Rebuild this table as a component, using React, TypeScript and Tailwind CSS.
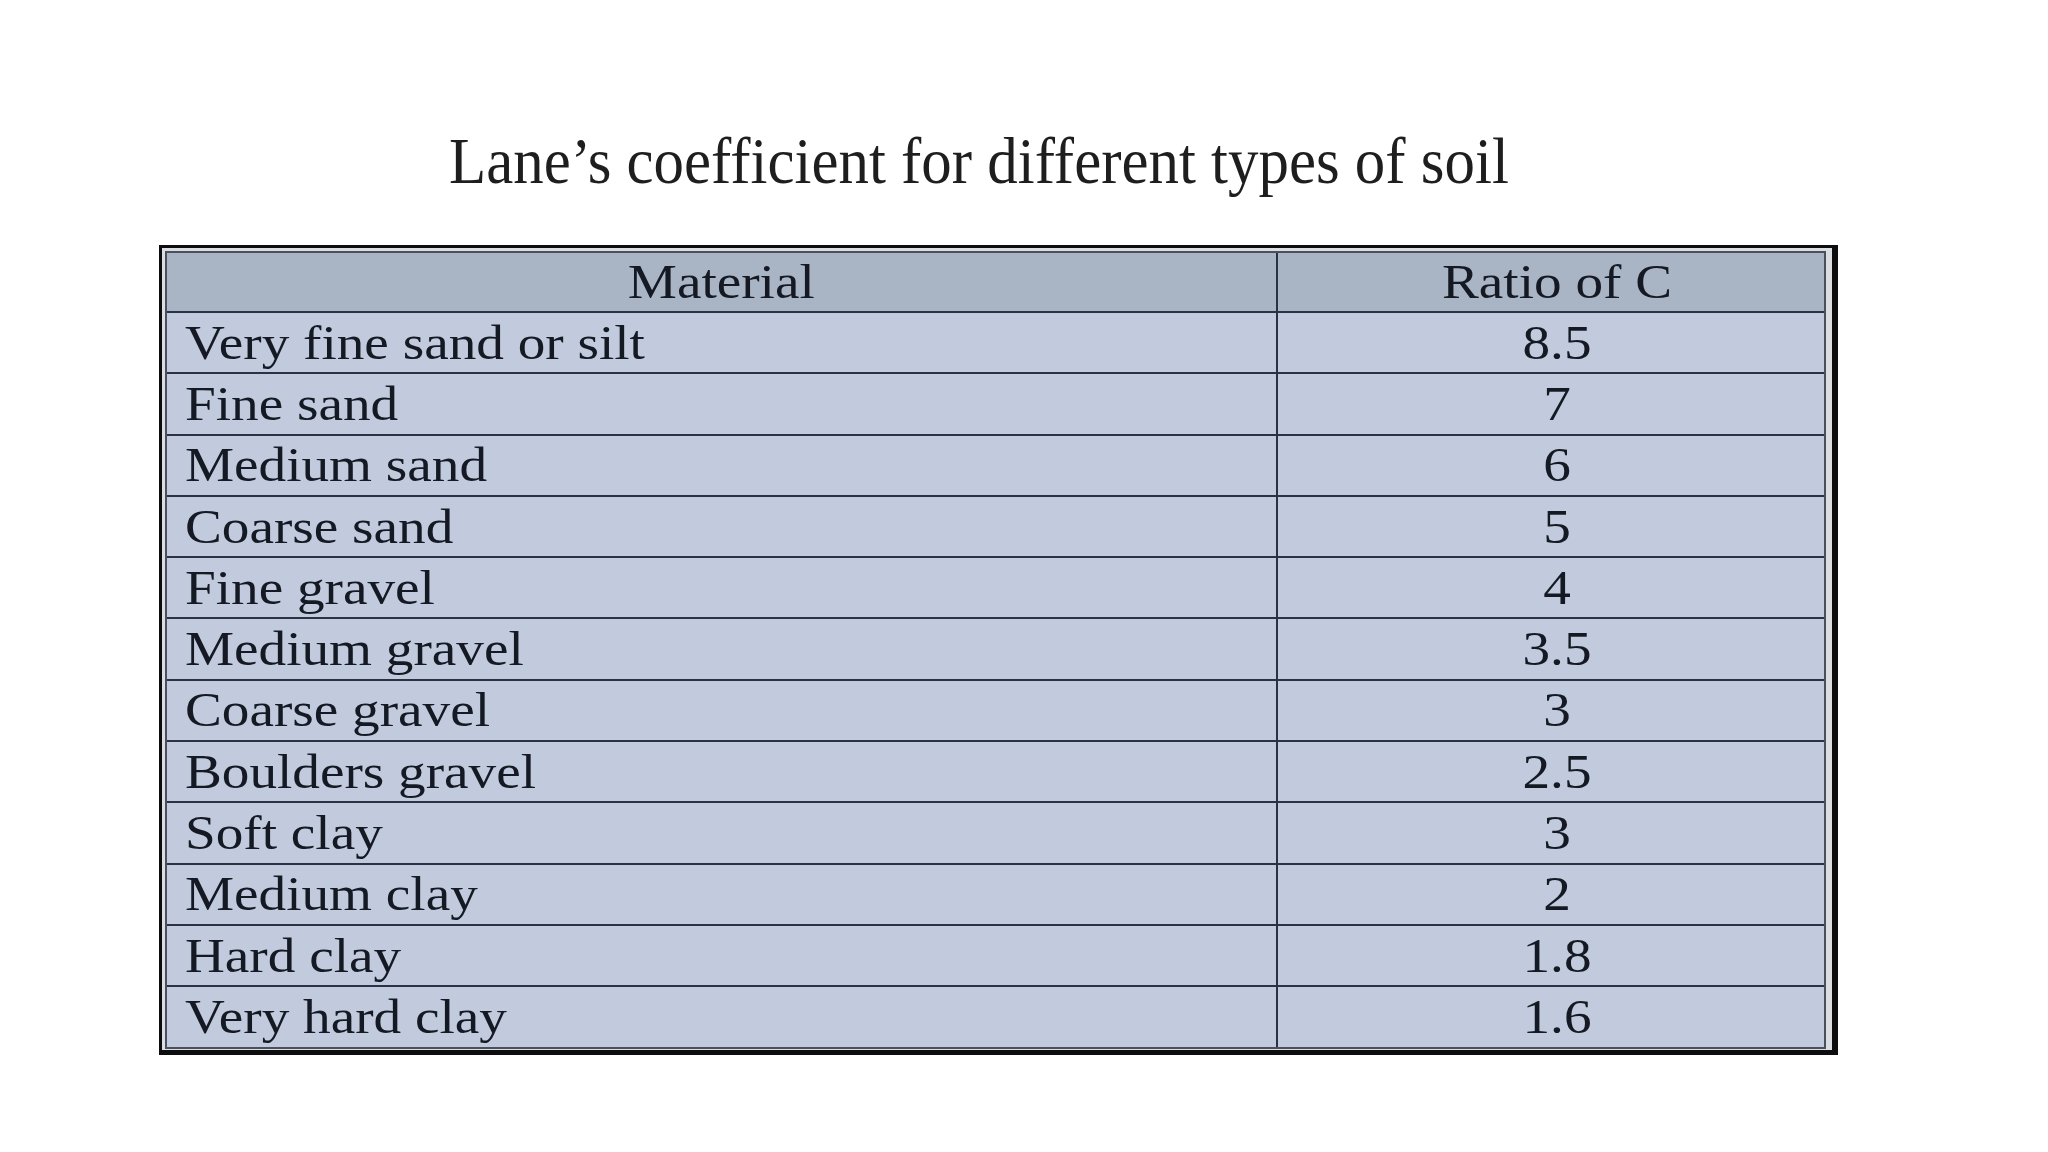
const rows: [string, string][] = [
  ["Very fine sand or silt", "8.5"],
  ["Fine sand", "7"],
  ["Medium sand", "6"],
  ["Coarse sand", "5"],
  ["Fine gravel", "4"],
  ["Medium gravel", "3.5"],
  ["Coarse gravel", "3"],
  ["Boulders gravel", "2.5"],
  ["Soft clay", "3"],
  ["Medium clay", "2"],
  ["Hard clay", "1.8"],
  ["Very hard clay", "1.6"],
];

export default function App() {
  return (
    <div className="h-[1152px] w-full overflow-hidden bg-white font-['Liberation_Serif','Times_New_Roman',serif] text-[#141923]">
      <div className="pl-[449px] pt-[129px]">
        <span className="inline-block origin-left scale-x-[0.937] text-[65px] leading-none whitespace-nowrap text-[#1e1e1e]">
          Lane’s coefficient for different types of soil
        </span>
      </div>

      <div className="ml-[159px] mt-[51px] w-[1679px] border-t-[3px] border-l-[3px] border-r-[6px] border-b-[5px] border-[#0d0d0f] bg-[#dcdde0] pt-[3px] pl-[3px] pr-[6px] pb-[1px]">
        <div className="grid grid-cols-[1111px_1fr] border-2 border-[#4a505c]">
          <div className="flex h-[58px] items-center justify-center border-r-2 border-[#2b3244] bg-[#a9b4c5]">
            <span className="inline-block scale-x-[1.15] text-[48px] leading-none">Material</span>
          </div>
          <div className="flex h-[58px] items-center justify-center bg-[#a9b4c5] pl-[12px]">
            <span className="inline-block scale-x-[1.15] text-[48px] leading-none whitespace-nowrap">Ratio of C</span>
          </div>
          {rows.map(([m, c]) => (
            <div key={m} className="contents">
              <div className="flex h-[61.3px] items-center border-t-2 border-r-2 border-[#2b3244] bg-[#c1cbdd] pl-[18px]">
                <span className="inline-block origin-left scale-x-[1.15] text-[48px] leading-none whitespace-nowrap">{m}</span>
              </div>
              <div className="flex h-[61.3px] items-center justify-center border-t-2 border-[#2b3244] bg-[#c1cbdd] pl-[12px]">
                <span className="inline-block scale-x-[1.15] text-[48px] leading-none">{c}</span>
              </div>
            </div>
          ))}
        </div>
      </div>
    </div>
  );
}
